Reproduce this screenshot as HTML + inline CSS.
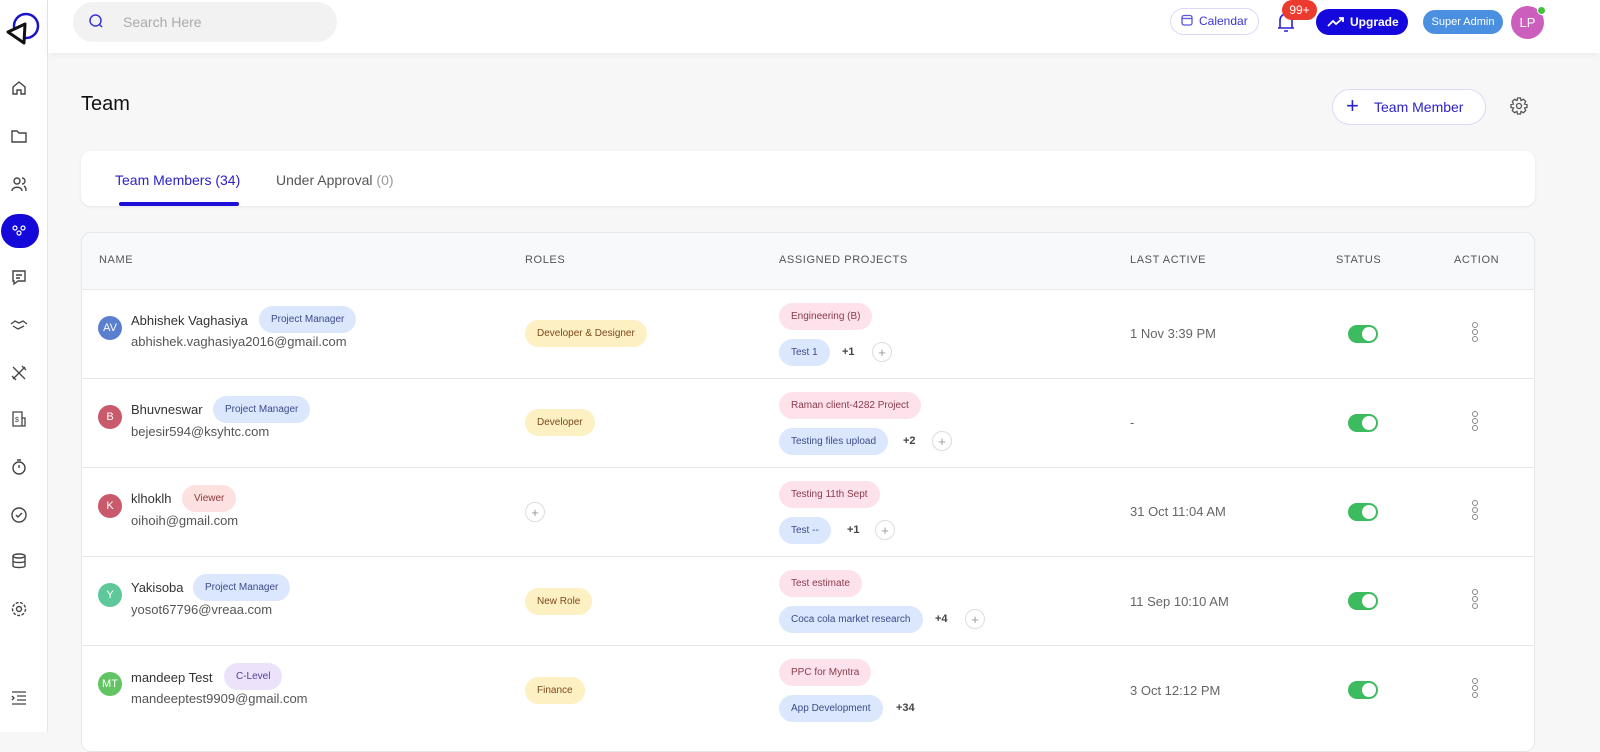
<!DOCTYPE html>
<html><head><meta charset="utf-8"><style>
*{box-sizing:border-box;margin:0;padding:0}
body{width:1600px;height:732px;overflow:hidden;background:#f7f7f8;font-family:"Liberation Sans",sans-serif;position:relative;color:#333}
.side{position:absolute;left:0;top:0;width:48px;height:732px;background:#fff;border-right:1px solid #e6e6e6}
.side svg{position:absolute;left:10px}
.top{position:absolute;left:48px;top:0;right:0;height:53px;background:#fff;box-shadow:0 2px 8px rgba(0,0,0,.05)}
.abs{position:absolute}
.pill{position:absolute;border-radius:14px;font-size:10px;padding:0 12px;height:27px;display:flex;align-items:center;white-space:nowrap}
.pm{background:#dbe7fd;color:#3d4b8a}
.role{background:#fdf0c2;color:#7a4a1e}
.pp{background:#fde2ec;color:#8a3a4c}
.pb{background:#dbe7fd;color:#3d4b8a}
.av{position:absolute;width:24px;height:24px;border-radius:50%;color:#fff;font-size:11px;display:flex;align-items:center;justify-content:center}
.nm{position:absolute;font-size:13px;color:#333}
.em{position:absolute;font-size:13px;color:#555}
.plus{position:absolute;width:20px;height:20px;border:1px solid #ddd;border-radius:50%;color:#999;font-size:13px;display:flex;align-items:center;justify-content:center;background:#fff}
.more{position:absolute;font-size:11px;font-weight:bold;color:#444}
.la{position:absolute;left:1130px;font-size:13px;color:#666}
.tg{position:absolute;left:1348px;width:30px;height:18px;border-radius:9px;background:#3dbb5f}
.tg:after{content:"";position:absolute;right:2px;top:2px;width:14px;height:14px;border-radius:50%;background:#fff}
.dots{position:absolute;left:1472px;width:7px}
.dots i{display:block;width:6px;height:6px;border:1.5px solid #888;border-radius:50%;margin-bottom:1px}
.row{position:absolute;left:81px;width:1454px;border-top:1px solid #e8e8e8}
.th{position:absolute;top:254px;font-size:11px;color:#555;letter-spacing:.6px}
</style></head><body>
<div class="side">
<svg style="left:4px;top:10px" width="38" height="38" viewBox="0 0 38 38"><circle cx="22" cy="16" r="12" fill="none" stroke="#1a14c9" stroke-width="2.5"/><path d="M4 22 L20 33 L21 14 Z" fill="#fff" stroke="#111" stroke-width="3" stroke-linejoin="round"/></svg>
<svg style="top:79px" width="18" height="18" viewBox="0 0 18 18" fill="none" stroke="#444" stroke-width="1.4"><path d="M3 8 L9 3 L15 8 V15 H11 V11 H7 V15 H3Z"/></svg>
<svg style="top:127px" width="18" height="18" viewBox="0 0 18 18" fill="none" stroke="#444" stroke-width="1.4"><path d="M2 4 H7 L9 6 H16 V15 H2Z"/></svg>
<svg style="top:175px" width="18" height="18" viewBox="0 0 18 18" fill="none" stroke="#444" stroke-width="1.4"><circle cx="7" cy="6" r="3"/><path d="M2 16 C2 11 12 11 12 16M12 3 A3 3 0 0 1 12 9M14 11 C16 12 16 14 16 16"/></svg>
<div class="abs" style="left:1px;top:214px;width:38px;height:34px;border-radius:17px;background:#1409d9"></div>
<svg style="top:223px;left:11px" width="16" height="16" viewBox="0 0 16 16" fill="none" stroke="#fff" stroke-width="1.2"><circle cx="4" cy="5" r="2"/><circle cx="12" cy="5" r="2"/><circle cx="8" cy="10" r="2"/></svg>
<svg style="top:268px" width="18" height="18" viewBox="0 0 18 18" fill="none" stroke="#444" stroke-width="1.4"><path d="M3 3 H15 V13 H8 L4 16 V13 H3Z M6 7 H12 M6 10 H10"/></svg>
<svg style="top:316px" width="18" height="18" viewBox="0 0 18 18" fill="none" stroke="#444" stroke-width="1.3"><path d="M1 8 L5 5 L9 7 L13 5 L17 8 M3 10 L8 13 L14 10"/></svg>
<svg style="top:364px" width="18" height="18" viewBox="0 0 18 18" fill="none" stroke="#444" stroke-width="1.3"><path d="M3 15 L15 3 M3 3 L15 15 M12 2 L16 6 M2 12 L6 16"/></svg>
<svg style="top:410px" width="18" height="18" viewBox="0 0 18 18" fill="none" stroke="#444" stroke-width="1.3"><path d="M3 2 H12 V16 H3Z M12 8 H15 V16 H12"/><text x="5" y="12" font-size="7" fill="#444" stroke="none">$</text></svg>
<svg style="top:458px" width="18" height="18" viewBox="0 0 18 18" fill="none" stroke="#444" stroke-width="1.4"><circle cx="9" cy="10" r="6"/><path d="M7 2 H11 M9 7 V10"/></svg>
<svg style="top:506px" width="18" height="18" viewBox="0 0 18 18" fill="none" stroke="#444" stroke-width="1.4"><circle cx="9" cy="9" r="7"/><path d="M6 9 L8 11 L12 7"/></svg>
<svg style="top:552px" width="18" height="18" viewBox="0 0 18 18" fill="none" stroke="#444" stroke-width="1.4"><ellipse cx="9" cy="4" rx="6" ry="2"/><path d="M3 4 V14 C3 16 15 16 15 14 V4 M3 9 C3 11 15 11 15 9"/></svg>
<svg style="top:600px" width="18" height="18" viewBox="0 0 18 18" fill="none" stroke="#444" stroke-width="1.4"><circle cx="9" cy="9" r="2.5"/><circle cx="9" cy="9" r="6.5" stroke-dasharray="3 1.5"/></svg>
<svg style="top:688px" width="18" height="18" viewBox="0 0 18 18" fill="none" stroke="#444" stroke-width="1.3"><path d="M2 4 H16 M7 8 H16 M7 12 H16 M2 16 H16 M2 8 L4 10 L2 12"/></svg>
</div>
<div class="top">
<div class="abs" style="left:25px;top:2px;width:264px;height:40px;border-radius:20px;background:#f2f2f2"></div>
<svg class="abs" style="left:40px;top:13px" width="16" height="16" viewBox="0 0 16 16" fill="none" stroke="#3b35d6" stroke-width="1.5"><circle cx="7.5" cy="7.5" r="5.5"/><path d="M11.5 11.5 L14 14"/></svg>
<div class="abs" style="left:75px;top:14px;font-size:14px;color:#aaa">Search Here</div>
<div class="abs" style="left:1122px;top:8px;width:89px;height:27px;border:1px solid #dcd8f5;border-radius:14px;font-size:12px;color:#3b35d6;line-height:25px;padding-left:28px">Calendar</div>
<svg class="abs" style="left:1133px;top:14px" width="12" height="12" viewBox="0 0 12 12" fill="none" stroke="#5b55e0" stroke-width="1.3"><rect x="1" y="1.5" width="10" height="9.5" rx="2"/><path d="M1 4.5 H11"/></svg>
<svg class="abs" style="left:1228px;top:11px" width="20" height="24" viewBox="0 0 20 24" fill="none" stroke="#2a1fd8" stroke-width="1.6"><path d="M4 17 V9 A6 6 0 0 1 16 9 V17 Z M2 17 H18 M8 20 H12"/></svg>
<div class="abs" style="left:1234px;top:0px;width:35px;height:20px;border-radius:10px;background:#ec3b2e;color:#fff;font-size:12px;text-align:center;line-height:20px">99+</div>
<div class="abs" style="left:1268px;top:9px;width:92px;height:26px;border-radius:13px;background:#1508dd;color:#fff;font-size:12px;font-weight:bold;line-height:26px;padding-left:34px">Upgrade</div>
<svg class="abs" style="left:1279px;top:16px" width="18" height="12" viewBox="0 0 18 12" fill="none" stroke="#fff" stroke-width="1.8"><path d="M1 10 L6 5 L9 8 L16 2 M12 2 H16 V6"/></svg>
<div class="abs" style="left:1375px;top:10px;width:80px;height:24px;border-radius:12px;background:#4a8fe0;color:#fff;font-size:11px;line-height:24px;text-align:center">Super Admin</div>
<div class="abs" style="left:1463px;top:6px;width:33px;height:33px;border-radius:50%;background:#cc5fbd;color:#fff;font-size:13px;line-height:33px;text-align:center">LP</div>
<div class="abs" style="left:1489px;top:6px;width:9px;height:9px;border-radius:50%;background:#3fc33a;border:1px solid #fff"></div>
</div>
<div class="abs" style="left:81px;top:93px;font-size:20px;color:#111">Team</div>
<div class="abs" style="left:1332px;top:89px;width:154px;height:36px;border:1px solid #dcd8f5;border-radius:18px;background:#fff;font-size:14px;color:#2a22c9;line-height:34px;padding-left:41px">Team Member</div>
<div class="abs" style="left:1346px;top:96px;font-size:22px;color:#2a22c9;line-height:20px;font-weight:300">+</div>
<svg class="abs" style="left:1509px;top:96px" width="20" height="20" viewBox="0 0 20 20" fill="none" stroke="#555" stroke-width="1.3"><circle cx="10" cy="10" r="2.5"/><path d="M8.5 2 H11.5 L12 4.5 L14.5 3.3 L16.7 5.5 L15.5 8 L18 8.5 V11.5 L15.5 12 L16.7 14.5 L14.5 16.7 L12 15.5 L11.5 18 H8.5 L8 15.5 L5.5 16.7 L3.3 14.5 L4.5 12 L2 11.5 V8.5 L4.5 8 L3.3 5.5 L5.5 3.3 L8 4.5Z"/></svg>
<div class="abs" style="left:81px;top:151px;width:1454px;height:55px;background:#fff;border-radius:10px;box-shadow:0 1px 3px rgba(0,0,0,.08)"></div>
<div class="abs" style="left:115px;top:172px;font-size:14px;color:#2a1fc7">Team Members (34)</div>
<div class="abs" style="left:119px;top:202px;width:120px;height:4px;border-radius:2px;background:#1a0ed8"></div>
<div class="abs" style="left:276px;top:172px;font-size:14px;color:#555">Under Approval <span style="color:#999">(0)</span></div>
<div class="abs" style="left:81px;top:232px;width:1454px;height:520px;background:#fff;border-radius:10px;border:1px solid #e6e6e6;overflow:hidden"><div style="height:57px;background:#f8f9fb"></div></div>
<div class="th" style="left:99px">NAME</div><div class="th" style="left:525px">ROLES</div><div class="th" style="left:779px">ASSIGNED PROJECTS</div><div class="th" style="left:1130px">LAST ACTIVE</div><div class="th" style="left:1336px">STATUS</div><div class="th" style="left:1454px">ACTION</div>

<div class="row" style="top:289px"></div>
<div class="av" style="left:98px;top:316px;background:#5b7fcf">AV</div>
<div class="nm" style="left:131px;top:313px">Abhishek Vaghasiya</div><div class="pill pm" style="left:259px;top:306px">Project Manager</div>
<div class="em" style="left:131px;top:334px">abhishek.vaghasiya2016@gmail.com</div>
<div class="pill role" style="left:525px;top:320px">Developer &amp; Designer</div>
<div class="pill pp" style="left:779px;top:303px">Engineering (B)</div>
<div class="pill pb" style="left:779px;top:339px">Test 1</div><div class="more" style="left:842px;top:346px">+1</div><div class="plus" style="left:872px;top:342px">+</div>
<div class="la" style="top:326px">1 Nov 3:39 PM</div><div class="tg" style="top:325px"></div><div class="dots" style="top:322px"><i></i><i></i><i></i></div>

<div class="row" style="top:378px"></div>
<div class="av" style="left:98px;top:405px;background:#c95a6c">B</div>
<div class="nm" style="left:131px;top:402px">Bhuvneswar</div><div class="pill pm" style="left:213px;top:396px">Project Manager</div>
<div class="em" style="left:131px;top:424px">bejesir594@ksyhtc.com</div>
<div class="pill role" style="left:525px;top:409px">Developer</div>
<div class="pill pp" style="left:779px;top:392px">Raman client-4282 Project</div>
<div class="pill pb" style="left:779px;top:428px">Testing files upload</div><div class="more" style="left:903px;top:435px">+2</div><div class="plus" style="left:932px;top:431px">+</div>
<div class="la" style="top:415px">-</div><div class="tg" style="top:414px"></div><div class="dots" style="top:411px"><i></i><i></i><i></i></div>

<div class="row" style="top:467px"></div>
<div class="av" style="left:98px;top:494px;background:#c95a6c">K</div>
<div class="nm" style="left:131px;top:491px">klhoklh</div><div class="pill" style="left:182px;top:485px;background:#fde0e0;color:#8a3a3a">Viewer</div>
<div class="em" style="left:131px;top:513px">oihoih@gmail.com</div>
<div class="plus" style="left:525px;top:502px">+</div>
<div class="pill pp" style="left:779px;top:481px">Testing 11th Sept</div>
<div class="pill pb" style="left:779px;top:517px">Test --</div><div class="more" style="left:847px;top:524px">+1</div><div class="plus" style="left:875px;top:520px">+</div>
<div class="la" style="top:504px">31 Oct 11:04 AM</div><div class="tg" style="top:503px"></div><div class="dots" style="top:500px"><i></i><i></i><i></i></div>

<div class="row" style="top:556px"></div>
<div class="av" style="left:98px;top:583px;background:#5ec89a">Y</div>
<div class="nm" style="left:131px;top:580px">Yakisoba</div><div class="pill pm" style="left:193px;top:574px">Project Manager</div>
<div class="em" style="left:131px;top:602px">yosot67796@vreaa.com</div>
<div class="pill role" style="left:525px;top:588px">New Role</div>
<div class="pill pp" style="left:779px;top:570px">Test estimate</div>
<div class="pill pb" style="left:779px;top:606px">Coca cola market research</div><div class="more" style="left:935px;top:613px">+4</div><div class="plus" style="left:965px;top:609px">+</div>
<div class="la" style="top:594px">11 Sep 10:10 AM</div><div class="tg" style="top:592px"></div><div class="dots" style="top:589px"><i></i><i></i><i></i></div>

<div class="row" style="top:645px"></div>
<div class="av" style="left:98px;top:672px;background:#62c462">MT</div>
<div class="nm" style="left:131px;top:670px">mandeep Test</div><div class="pill" style="left:224px;top:663px;background:#ece3fb;color:#5a3a9a">C-Level</div>
<div class="em" style="left:131px;top:691px">mandeeptest9909@gmail.com</div>
<div class="pill role" style="left:525px;top:677px">Finance</div>
<div class="pill pp" style="left:779px;top:659px">PPC for Myntra</div>
<div class="pill pb" style="left:779px;top:695px">App Development</div><div class="more" style="left:896px;top:702px">+34</div>
<div class="la" style="top:683px">3 Oct 12:12 PM</div><div class="tg" style="top:681px"></div><div class="dots" style="top:678px"><i></i><i></i><i></i></div>
</body></html>
